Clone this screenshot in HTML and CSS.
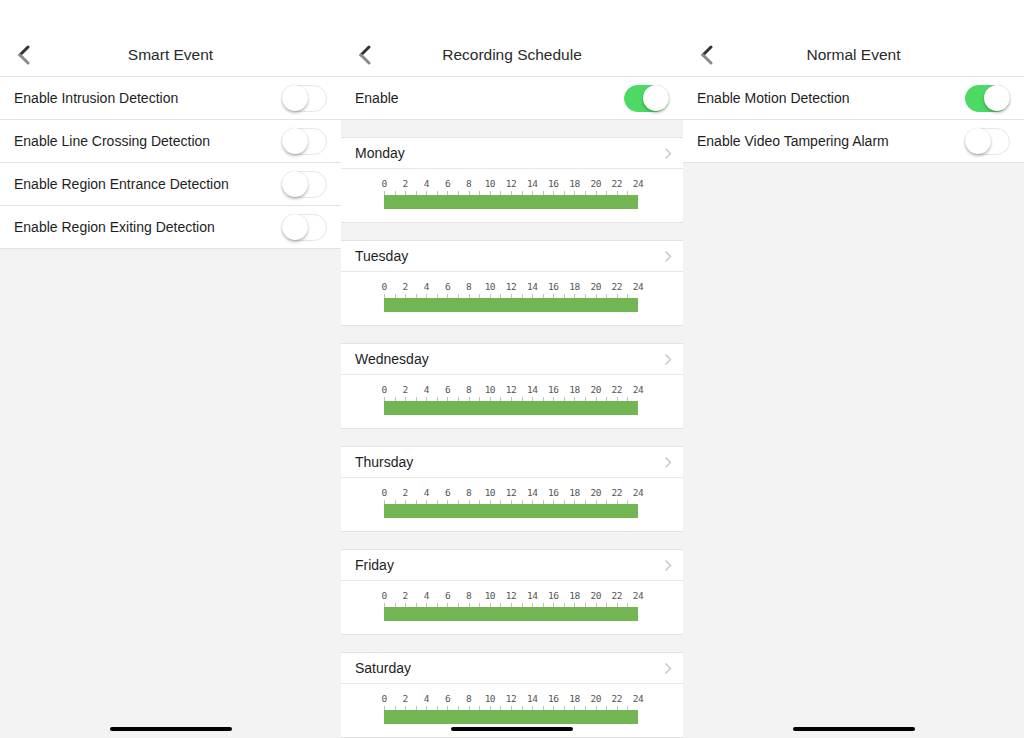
FILE: index.html
```
<!DOCTYPE html>
<html lang="en">
<head>
  <meta charset="UTF-8" />
  <meta name="viewport" content="width=device-width, initial-scale=1.0"/>
  <title>Camera Settings</title>
  <link rel="stylesheet" href="styles.css">
</head>
<body>
  <div class="pantallas">

    <!-- Smart Event -->
    <section class="pantalla">
      <header class="nav">
        <span class="atras"><svg width="14" height="20" viewBox="0 0 14 20"><path d="M11 2 L3 10" stroke="#333" stroke-width="3" stroke-linecap="round"/><path d="M3 10 L11 18" stroke="#8a8a8a" stroke-width="3" stroke-linecap="round"/></svg></span>
        <h1>Smart Event</h1>
      </header>
      <ul class="lista">
        <li class="fila"><span>Enable Intrusion Detection</span><span class="switch"></span></li>
        <li class="fila"><span>Enable Line Crossing Detection</span><span class="switch"></span></li>
        <li class="fila"><span>Enable Region Entrance Detection</span><span class="switch"></span></li>
        <li class="fila"><span>Enable Region Exiting Detection</span><span class="switch"></span></li>
      </ul>
      <div class="home-bar"></div>
    </section>

    <!-- Recording Schedule -->
    <section class="pantalla blanca">
      <header class="nav">
        <span class="atras"><svg width="14" height="20" viewBox="0 0 14 20"><path d="M11 2 L3 10" stroke="#333" stroke-width="3" stroke-linecap="round"/><path d="M3 10 L11 18" stroke="#8a8a8a" stroke-width="3" stroke-linecap="round"/></svg></span>
        <h1>Recording Schedule</h1>
      </header>
      <ul class="lista">
        <li class="fila"><span>Enable</span><span class="switch on"></span></li>
      </ul>
      <div id="dias"></div>
      <div class="home-bar"></div>
    </section>

    <!-- Normal Event -->
    <section class="pantalla">
      <header class="nav">
        <span class="atras"><svg width="14" height="20" viewBox="0 0 14 20"><path d="M11 2 L3 10" stroke="#333" stroke-width="3" stroke-linecap="round"/><path d="M3 10 L11 18" stroke="#8a8a8a" stroke-width="3" stroke-linecap="round"/></svg></span>
        <h1>Normal Event</h1>
      </header>
      <ul class="lista">
        <li class="fila"><span>Enable Motion Detection</span><span class="switch on"></span></li>
        <li class="fila"><span>Enable Video Tampering Alarm</span><span class="switch"></span></li>
      </ul>
      <div class="home-bar"></div>
    </section>

  </div>

  <script>
    const dias = ["Monday", "Tuesday", "Wednesday", "Thursday", "Friday", "Saturday"];
    const contenedor = document.getElementById("dias");

    dias.forEach(dia => {
      let etiquetas = "";
      for (let h = 0; h <= 24; h += 2) etiquetas += `<span>${h}</span>`;

      const div = document.createElement("div");
      div.className = "dia";
      div.innerHTML = `
        <div class="dia-titulo">
          <span>${dia}</span>
          <svg width="8" height="13" viewBox="0 0 8 13"><path d="M1.5 1.5 L6.5 6.5 L1.5 11.5" fill="none" stroke="#c4c4c4" stroke-width="1.4"/></svg>
        </div>
        <div class="regla">
          <div class="horas">${etiquetas}</div>
          <div class="marcas"></div>
          <div class="barra"></div>
        </div>
      `;
      contenedor.appendChild(div);
    });
  </script>
</body>
</html>
```

FILE: styles.css
```
* { margin: 0; padding: 0; box-sizing: border-box; }

body {
  font-family: "Liberation Sans", Arial, sans-serif;
  background: #f3f3f3;
  color: #1e1e1e;
  width: 1024px;
  height: 738px;
  overflow: hidden;
}

.pantallas {
  display: grid;
  grid-template-columns: 341px 342px 341px;
  height: 738px;
}

.pantalla {
  position: relative;
  background: #f3f3f3;
  overflow: hidden;
}

.nav {
  height: 77px;
  padding-top: 34px;
  background: #fff;
  border-bottom: 1px solid #e2e2e2;
  display: flex;
  align-items: center;
  justify-content: center;
  position: relative;
}

.nav h1 {
  font-size: 15.5px;
  font-weight: normal;
  color: #2a2a2a;
}

.atras {
  position: absolute;
  left: 17px;
  top: 45px;
  display: flex;
}

.lista {
  list-style: none;
  background: #fff;
}

.fila {
  height: 43px;
  padding: 0 14px;
  border-bottom: 1px solid #e2e2e2;
  display: flex;
  align-items: center;
  justify-content: space-between;
  font-size: 14px;
}

/* interruptor estilo iOS */
.switch {
  width: 45px;
  height: 27px;
  border-radius: 14px;
  border: 1.5px solid #e6e6e6;
  background: #fff;
  position: relative;
}

.switch::after {
  content: "";
  position: absolute;
  top: -1px;
  left: -1px;
  width: 26px;
  height: 26px;
  border-radius: 50%;
  background: #fff;
  box-shadow: 0 2px 3px rgba(0,0,0,0.25), 0 0 1px rgba(0,0,0,0.2);
}

.switch.on {
  background: #4cd964;
  border-color: #4cd964;
}

.switch.on::after {
  left: auto;
  right: -1px;
}

.pantalla.blanca #dias {
  padding-top: 17px;
}

.dia {
  background: #fff;
  border-top: 1px solid #e2e2e2;
  border-bottom: 1px solid #e2e2e2;
  margin-bottom: 17px;
}

.dia-titulo {
  height: 31px;
  padding: 0 14px;
  display: flex;
  align-items: center;
  justify-content: space-between;
  border-bottom: 1px solid #e8e8e8;
  font-size: 14px;
}

.dia-titulo svg {
  margin-right: -3px;
}

.regla {
  height: 53px;
  padding: 8px 0 0 43px;
}

.horas {
  display: grid;
  grid-template-columns: repeat(13, 21.17px);
  margin-left: -10.5px;
  font-family: "DejaVu Sans Mono", monospace;
  font-size: 9.5px;
  color: #555;
  text-align: center;
  height: 13px;
  line-height: 13px;
  letter-spacing: -0.5px;
}

.marcas {
  width: 254px;
  height: 4px;
  margin-top: 1px;
  background: repeating-linear-gradient(to right, #c2c2c2 0 1px, transparent 1px 10.583px);
}

.barra {
  width: 254px;
  height: 14px;
  background: #72b553;
}

.home-bar {
  position: absolute;
  bottom: 7px;
  left: 50%;
  width: 122px;
  height: 4px;
  margin-left: -61px;
  border-radius: 2px;
  background: #000;
}
```
